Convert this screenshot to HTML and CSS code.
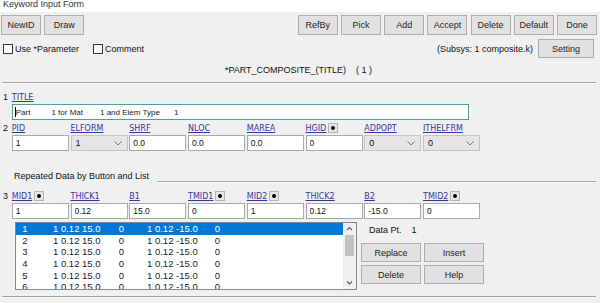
FILE: index.html
```html
<!DOCTYPE html>
<html lang="en">
<head>
  <meta charset="UTF-8">
  <title>Keyword Input Form</title>
  <link rel="stylesheet" href="styles.css">
</head>

<body>

  <!-- Window caption (cut off at top) -->
  <div class="caption"><span>Keyword Input Form</span></div>

  <!-- Command buttons -->
  <div class="toolbar">
    <div class="btn-group">
      <button class="btn">NewID</button>
      <button class="btn">Draw</button>
    </div>
    <div class="btn-group">
      <button class="btn">RefBy</button>
      <button class="btn">Pick</button>
      <button class="btn">Add</button>
      <button class="btn">Accept</button>
      <button class="btn">Delete</button>
      <button class="btn">Default</button>
      <button class="btn">Done</button>
    </div>
  </div>

  <div class="optrow">
    <label class="check"><span class="box"></span>Use *Parameter</label>
    <label class="check comment"><span class="box"></span>Comment</label>
    <span class="subsys">(Subsys: 1 composite.k)</span>
    <button class="btn setting">Setting</button>
  </div>

  <div class="kwtitle">*PART_COMPOSITE_(TITLE)&nbsp;&nbsp;&nbsp;&nbsp;( 1 )</div>

  <div class="sep"></div>

  <!-- Card 1 -->
  <div class="fields labels row1">
    <span class="num">1</span>
    <span class="lbl"><a>TITLE</a></span>
  </div>
  <div class="fields inputs">
    <span></span>
    <div class="title-field"><span class="caret"></span><span class="t1">Part</span><span class="t2">1 for Mat</span><span class="t3">1 and Elem Type</span><span class="t4">1</span></div>
  </div>

  <!-- Card 2 -->
  <div class="fields labels row2">
    <span class="num">2</span>
    <span class="lbl"><a>PID</a></span>
    <span class="lbl"><a>ELFORM</a></span>
    <span class="lbl"><a>SHRF</a></span>
    <span class="lbl"><a>NLOC</a></span>
    <span class="lbl"><a>MAREA</a></span>
    <span class="lbl"><a>HGID</a><span class="dot"></span></span>
    <span class="lbl"><a>ADPOPT</a></span>
    <span class="lbl"><a>ITHELFRM</a></span>
  </div>
  <div class="fields inputs">
    <span></span>
    <input class="fld" value="1">
    <div class="sel"><span>1</span><svg width="8" height="5" viewBox="0 0 8 5"><polyline points="0.5,0.5 4,4 7.5,0.5" fill="none" stroke="#707070" stroke-width="1"/></svg></div>
    <input class="fld" value="0.0">
    <input class="fld" value="0.0">
    <input class="fld" value="0.0">
    <input class="fld" value="0">
    <div class="sel"><span>0</span><svg width="8" height="5" viewBox="0 0 8 5"><polyline points="0.5,0.5 4,4 7.5,0.5" fill="none" stroke="#707070" stroke-width="1"/></svg></div>
    <div class="sel"><span>0</span><svg width="8" height="5" viewBox="0 0 8 5"><polyline points="0.5,0.5 4,4 7.5,0.5" fill="none" stroke="#707070" stroke-width="1"/></svg></div>
  </div>

  <!-- Repeated data -->
  <div class="repeat-head">
    <span>Repeated Data by Button and List</span>
    <div class="line"></div>
  </div>

  <div class="fields labels row3">
    <span class="num">3</span>
    <span class="lbl"><a>MID1</a><span class="dot"></span></span>
    <span class="lbl"><a>THICK1</a></span>
    <span class="lbl"><a>B1</a></span>
    <span class="lbl"><a>TMID1</a><span class="dot"></span></span>
    <span class="lbl"><a>MID2</a><span class="dot"></span></span>
    <span class="lbl"><a>THICK2</a></span>
    <span class="lbl"><a>B2</a></span>
    <span class="lbl"><a>TMID2</a><span class="dot"></span></span>
  </div>
  <div class="fields inputs">
    <span></span>
    <input class="fld" value="1">
    <input class="fld" value="0.12">
    <input class="fld" value="15.0">
    <input class="fld" value="0">
    <input class="fld" value="1">
    <input class="fld" value="0.12">
    <input class="fld" value="-15.0">
    <input class="fld" value="0">
  </div>

  <div class="list-area">
    <div class="listbox">
      <div class="rows">
        <div class="row selected"><span>1</span><span>1 0.12 15.0</span><span>0</span><span>1 0.12 -15.0</span><span>0</span></div>
        <div class="row"><span>2</span><span>1 0.12 15.0</span><span>0</span><span>1 0.12 -15.0</span><span>0</span></div>
        <div class="row"><span>3</span><span>1 0.12 15.0</span><span>0</span><span>1 0.12 -15.0</span><span>0</span></div>
        <div class="row"><span>4</span><span>1 0.12 15.0</span><span>0</span><span>1 0.12 -15.0</span><span>0</span></div>
        <div class="row"><span>5</span><span>1 0.12 15.0</span><span>0</span><span>1 0.12 -15.0</span><span>0</span></div>
        <div class="row"><span>6</span><span>1 0.12 15.0</span><span>0</span><span>1 0.12 -15.0</span><span>0</span></div>
      </div>
      <div class="vscroll">
        <svg width="13" height="12" viewBox="0 0 13 12"><polyline points="4,7 6.5,4.5 9,7" fill="none" stroke="#606060" stroke-width="1.2"/></svg>
        <div class="thumb"></div>
        <div class="track"></div>
        <svg width="13" height="12" viewBox="0 0 13 12"><polyline points="4,4.5 6.5,7 9,4.5" fill="none" stroke="#606060" stroke-width="1.2"/></svg>
      </div>
    </div>

    <div class="panel">
      <div class="datapt"><span>Data Pt.</span><span>1</span></div>
      <div class="panel-btns">
        <button class="btn">Replace</button>
        <button class="btn">Insert</button>
        <button class="btn">Delete</button>
        <button class="btn">Help</button>
      </div>
    </div>
  </div>

  <div class="sep bottom"></div>

</body>
</html>
```

FILE: styles.css
```css
    body {
      margin: 0;
      background: #f0f0f0;
      font-family: 'Liberation Sans', Arial, sans-serif;
      font-size: 9px;
      color: #111;
      width: 600px;
      height: 303px;
      overflow: hidden;
    }

    .caption {
      height: 12px;
      background: #fff;
      overflow: hidden;
    }

    .caption span {
      display: block;
      padding-left: 3px;
      font-size: 9px;
      line-height: 9px;
      color: #333;
    }

    .btn {
      font-family: 'Liberation Sans', Arial, sans-serif;
      font-size: 9px;
      color: #222;
      background: #e1e1e1;
      border: 1px solid #adadad;
      border-radius: 0;
      padding: 0;
      margin: 0;
      width: 40px;
      height: 20px;
    }

    /* toolbar */
    .toolbar {
      display: flex;
      justify-content: space-between;
      padding: 3px 3px 0 1px;
    }

    .btn-group {
      display: flex;
      gap: 3.2px;
    }

    .optrow {
      display: flex;
      align-items: center;
      margin-top: 4px;
      padding-left: 3px;
      height: 19px;
    }

    .check {
      display: flex;
      align-items: center;
      gap: 2px;
    }

    .check.comment {
      margin-left: 14px;
    }

    .box {
      width: 8px;
      height: 8px;
      border: 1px solid #333;
      background: #fff;
    }

    .subsys {
      margin-left: auto;
      margin-right: 5px;
      font-size: 9px;
    }

    .btn.setting {
      width: 56px;
      height: 19px;
      margin-right: 6px;
    }

    .kwtitle {
      text-align: center;
      margin-top: 6px;
      padding-right: 3px;
      line-height: 12px;
    }

    .sep {
      margin: 6px 4px 0 2px;
      border-top: 1px solid #a0a0a0;
      border-bottom: 1px solid #fbfbfb;
    }

    .sep.bottom {
      margin-top: 6px;
    }

    /* field cards */
    .fields {
      display: grid;
      grid-template-columns: 9px repeat(8, 57px);
      column-gap: 1.75px;
      padding-left: 1px;
    }

    .fields.labels {
      height: 12px;
      align-items: center;
    }

    .row1 { margin-top: 7px; }
    .row2 { margin-top: 2px; }
    .row3 { margin-top: 9px; }

    .fields.inputs {
      height: 16px;
      margin-top: 1px;
    }

    .num {
      padding-left: 2px;
      color: #111;
    }

    .lbl {
      display: flex;
      align-items: center;
      gap: 2px;
    }

    .lbl a {
      font-family: 'DejaVu Sans', Verdana, sans-serif;
      font-size: 8px;
      color: #3434a0;
      text-decoration: underline;
    }

    .dot {
      width: 8px;
      height: 8px;
      background: #e6e6e6;
      border: 1px solid #b4b4b4;
      display: flex;
      align-items: center;
      justify-content: center;
    }

    .dot::after {
      content: '';
      width: 4px;
      height: 4px;
      border-radius: 50%;
      background: #000;
    }

    .fld {
      box-sizing: border-box;
      width: 57px;
      height: 16px;
      margin: 0;
      padding: 0 3px;
      border: 1px solid #a8a8a8;
      background: #fff;
      font-family: 'Liberation Sans', Arial, sans-serif;
      font-size: 8.5px;
      color: #111;
    }

    .sel {
      box-sizing: border-box;
      height: 16px;
      border: 1px solid #c4c4c4;
      background: #e5e5e5;
      display: flex;
      align-items: center;
      justify-content: space-between;
      padding: 0 5px 0 4px;
      font-size: 9px;
    }

    .title-field {
      grid-column: 2 / span 8;
      box-sizing: border-box;
      width: 457px;
      height: 16px;
      border: 1px solid #4aa0a0;
      background: #fff;
      display: flex;
      align-items: center;
      font-size: 8px;
      color: #222;
    }

    .caret {
      width: 1px;
      height: 10px;
      background: #000;
      margin-left: 2px;
    }

    .t2 { margin-left: 21px; }
    .t3 { margin-left: 17px; }
    .t4 { margin-left: 14px; }

    .repeat-head {
      display: flex;
      align-items: flex-end;
      margin-top: 17px;
      padding-left: 14px;
      height: 13px;
    }

    .repeat-head .line {
      flex: 1;
      margin: 0 4px 0 8px;
      border-top: 1px solid #a0a0a0;
      border-bottom: 1px solid #fbfbfb;
      position: relative;
      top: 2px;
    }

    /* list + right panel */
    .list-area {
      display: flex;
      margin-top: 3px;
      padding-left: 15px;
    }

    .listbox {
      box-sizing: border-box;
      width: 342px;
      height: 68px;
      border: 1px solid #828790;
      background: #fff;
      display: flex;
      overflow: hidden;
    }

    .rows {
      flex: 1;
    }

    .row {
      display: grid;
      grid-template-columns: 18px 81px 13px 77px 25px;
      height: 11.7px;
      line-height: 11.7px;
      font-size: 9.5px;
      color: #222;
    }

    .row span:nth-child(1),
    .row span:nth-child(3),
    .row span:nth-child(5) {
      text-align: center;
    }

    .row span:nth-child(2),
    .row span:nth-child(4) {
      padding-left: 19px;
    }

    .row.selected {
      background: #0078d7;
      color: #fff;
    }

    .vscroll {
      width: 13px;
      background: #f0f0f0;
      display: flex;
      flex-direction: column;
      align-items: center;
    }

    .thumb {
      width: 9px;
      height: 21px;
      background: #c2c2c2;
    }

    .track {
      flex: 1;
    }

    .panel {
      margin-left: 4px;
      width: 123px;
    }

    .datapt {
      display: flex;
      gap: 10px;
      padding-left: 8px;
      margin-top: 2px;
      height: 12px;
      align-items: center;
    }

    .panel-btns {
      display: grid;
      grid-template-columns: 60px 60px;
      gap: 3px;
      margin-top: 7px;
    }

    .panel-btns .btn {
      width: 60px;
      height: 19px;
    }
```
